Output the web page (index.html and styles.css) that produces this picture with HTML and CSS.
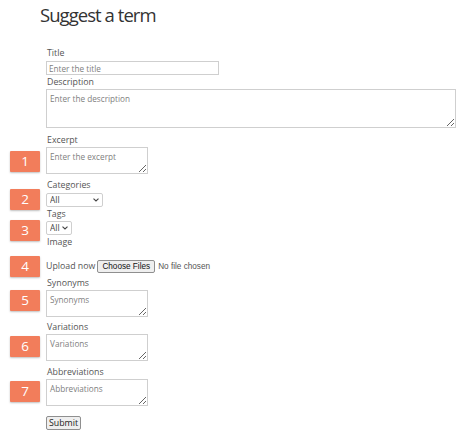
FILE: index.html
```html
<!DOCTYPE html>
<html>
<head>
<meta charset="utf-8">
<link rel="stylesheet" href="styles.css">
</head>
<body>
<div class="page">
  <h1 class="heading">Suggest a term</h1>
  <form class="form">
    <label class="lbl">Title</label>
    <input class="inp title-inp" type="text" placeholder="Enter the title">
    <label class="lbl">Description</label>
    <textarea class="ta desc-ta" placeholder="Enter the description"></textarea>
    <label class="lbl gap5">Excerpt</label>
    <textarea class="ta small-ta" placeholder="Enter the excerpt"></textarea>
    <label class="lbl gap4">Categories</label>
    <div class="sel-wrap cat-wrap">
      <select class="sel cat-sel"><option>All</option></select>
      <svg class="chev" width="6" height="4" viewBox="0 0 6 4"><path d="M0.5 0.6 L3 3 L5.5 0.6" fill="none" stroke="#444" stroke-width="1.1"/></svg>
    </div>
    <label class="lbl">Tags</label>
    <div class="sel-wrap">
      <select class="sel tag-sel"><option>All</option></select>
      <svg class="chev" width="6" height="4" viewBox="0 0 6 4"><path d="M0.5 0.6 L3 3 L5.5 0.6" fill="none" stroke="#444" stroke-width="1.1"/></svg>
    </div>
    <label class="lbl">Image</label>
    <div class="upload">
      <span class="upload-txt">Upload now</span>
      <span class="file-btn">Choose Files</span>
      <span class="file-none">No file chosen</span>
    </div>
    <label class="lbl gap2">Synonyms</label>
    <textarea class="ta small-ta" placeholder="Synonyms"></textarea>
    <label class="lbl gap3">Variations</label>
    <textarea class="ta small-ta" placeholder="Variations"></textarea>
    <label class="lbl gap4">Abbreviations</label>
    <textarea class="ta small-ta" placeholder="Abbreviations"></textarea>
    <button class="submit" type="button">Submit</button>
  </form>
  <div class="badge b1">1</div>
  <div class="badge b2">2</div>
  <div class="badge b3">3</div>
  <div class="badge b4">4</div>
  <div class="badge b5">5</div>
  <div class="badge b6">6</div>
  <div class="badge b7">7</div>
</div>
</body>
</html>
```
FILE: styles.css
```css
html, body {
  margin: 0;
  padding: 0;
  background: #ffffff;
}
.page {
  position: relative;
  width: 474px;
  height: 440px;
  font-family: "Open Sans", "Liberation Sans", sans-serif;
  color: #555;
}
.heading {
  margin: 0;
  padding: 1px 0 0 40px;
  font-size: 18.5px;
  font-weight: 400;
  letter-spacing: -0.95px;
  line-height: 28px;
  color: #333;
}
.form {
  display: flex;
  flex-direction: column;
  align-items: flex-start;
  padding: 17px 0 0 46px;
}
.lbl {
  display: block;
  height: 14px;
  font-size: 8.8px;
  line-height: 14px;
  color: #555;
  padding-left: 1px;
}
.gap2 { margin-top: 2px; }
.gap3 { margin-top: 3px; }
.gap4 { margin-top: 4px; }
.gap5 { margin-top: 5px; }
.inp, .ta, .sel {
  box-sizing: border-box;
  margin: 0;
  border: 1px solid #cfcfcf;
  background: #fff;
  font-family: "Open Sans", "Liberation Sans", sans-serif;
  font-size: 8.2px;
  color: #444;
}
.inp::placeholder, .ta::placeholder {
  color: #808080;
}
.title-inp {
  display: block;
  margin-top: 1px;
  width: 173px;
  height: 14px;
  padding: 0 2px;
}
.ta {
  display: block;
  padding: 3px 3px;
  resize: vertical;
}
.desc-ta {
  width: 410px;
  height: 39px;
}
.small-ta {
  width: 102px;
  height: 27px;
}
.sel-wrap {
  position: relative;
  height: 14px;
}
.cat-wrap { margin-top: 1px; }
.sel {
  display: block;
  -webkit-appearance: none;
  appearance: none;
  height: 14px;
  padding: 0 0 0 3px;
  border-radius: 2px;
  font-size: 8.4px;
  line-height: 12px;
}
.cat-sel { width: 57px; }
.tag-sel { width: 26px; }
.chev {
  position: absolute;
  right: 4px;
  top: 5px;
}
.upload {
  display: flex;
  align-items: center;
  height: 16px;
  margin-top: 9px;
  font-size: 8.8px;
  color: #555;
}
.file-btn {
  margin-left: 2px;
  box-sizing: border-box;
  height: 13px;
  line-height: 11px;
  padding: 0 4px;
  border: 1px solid #8f8f8f;
  border-radius: 2px;
  background: #efefef;
  color: #111;
  font-family: "Liberation Sans", sans-serif;
  font-size: 8.2px;
}
.file-none {
  margin-left: 3px;
  font-family: "Liberation Sans", sans-serif;
  font-size: 8.2px;
  color: #555;
}
.submit {
  margin-top: 10px;
  box-sizing: border-box;
  height: 14px;
  padding: 0 2px;
  line-height: 11px;
  border: 1px solid #8f8f8f;
  border-radius: 2px;
  background: #efefef;
  color: #222;
  font-family: "Open Sans", "Liberation Sans", sans-serif;
  font-size: 8.8px;
}
.badge {
  position: absolute;
  left: 10px;
  width: 30px;
  height: 21px;
  background: #f27d5b;
  color: #fff;
  font-size: 13.5px;
  line-height: 21px;
  text-align: center;
  border-radius: 1px;
  box-shadow: 0 1px 2px rgba(0,0,0,0.25);
}
.b1 { top: 151px; }
.b2 { top: 189px; }
.b3 { top: 220px; }
.b4 { top: 256px; }
.b5 { top: 290px; }
.b6 { top: 336px; }
.b7 { top: 381px; }
```
